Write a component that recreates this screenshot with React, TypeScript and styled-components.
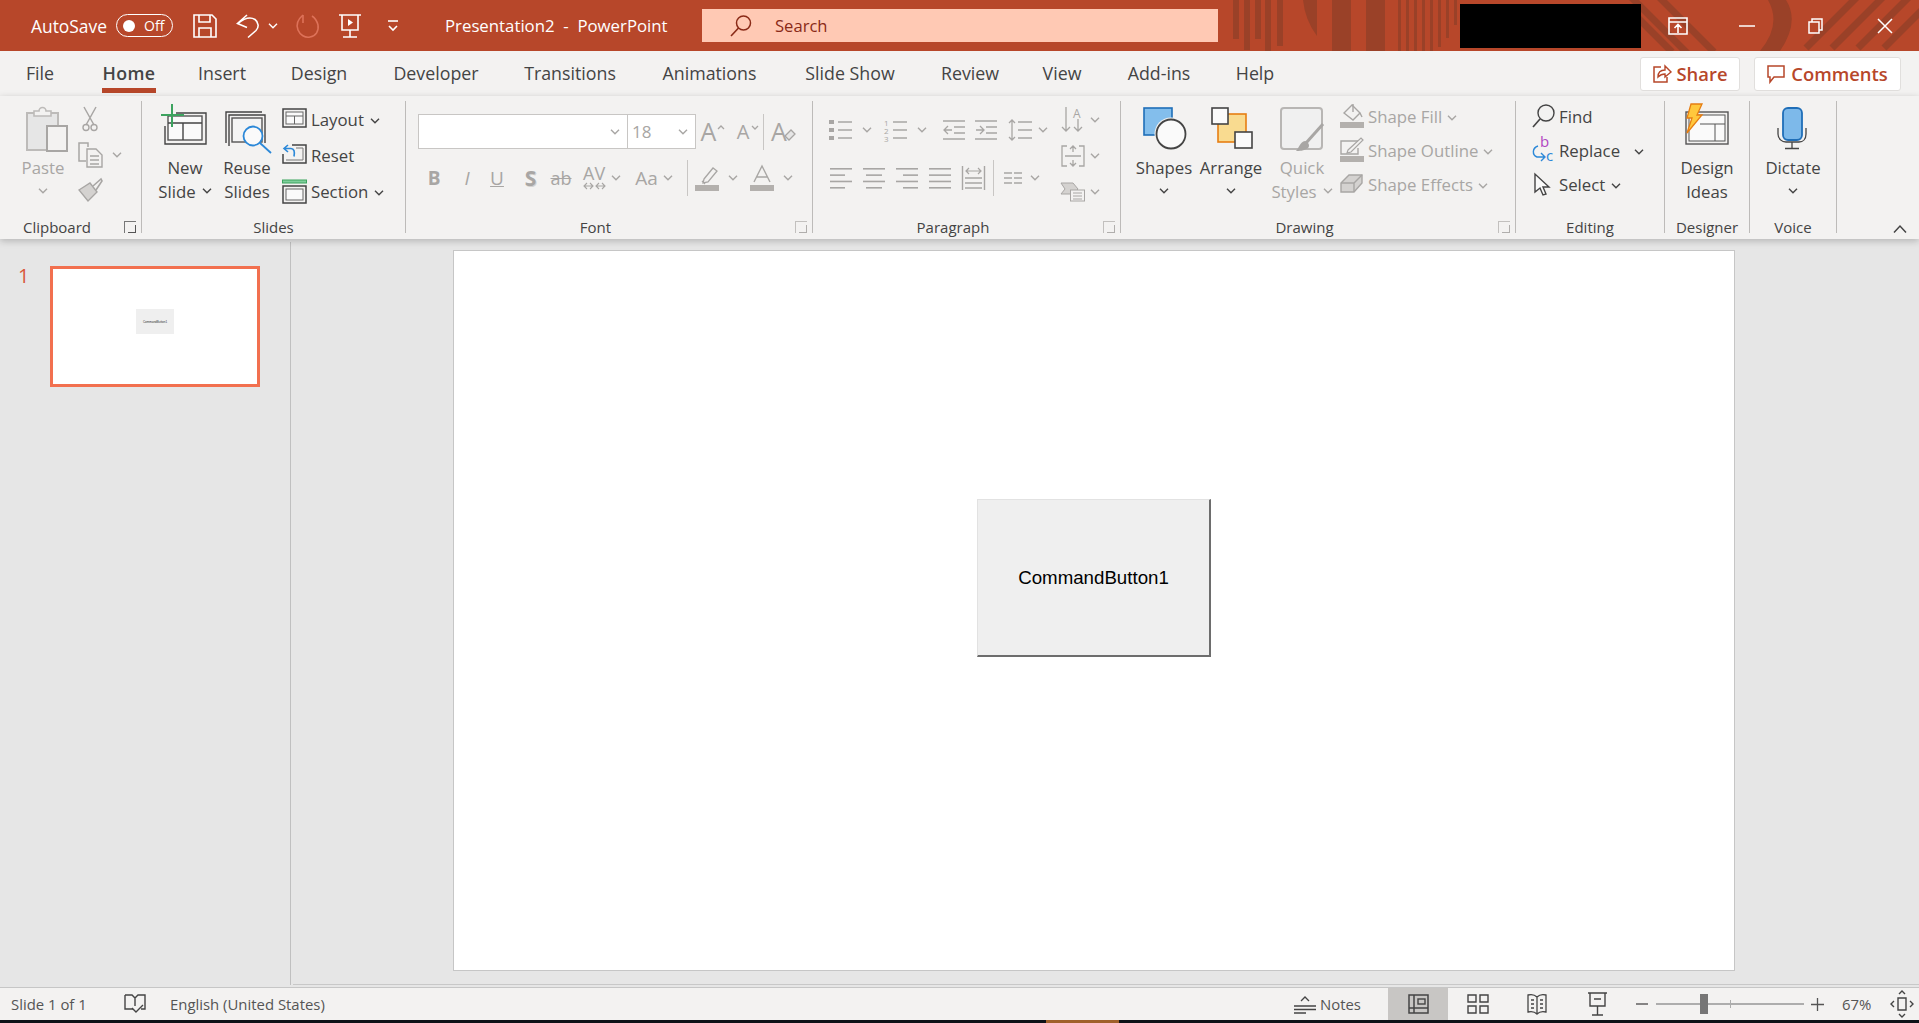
import React from 'react';
import styled, { createGlobalStyle } from 'styled-components';

const FONT = '"Open Sans", "Noto Sans", sans-serif';
const ACCENT = '#b7472a';
const INK = '#444444';
const MUTED = '#a8a6a4';
const BLUE = '#2b88d8';

const GlobalStyle = createGlobalStyle`
  html, body { margin: 0; padding: 0; background: #000; }
  body { font-family: ${FONT}; overflow: hidden; }
  * { box-sizing: border-box; }
`;

const Page = styled.div`
  width: 1919px;
  height: 1023px;
  display: flex;
  flex-direction: column;
  overflow: hidden;
`;

/* ---------- shared bits ---------- */

const IconSvg = styled.svg<{ $ml?: number }>`
  display: block;
  flex: none;
  overflow: visible;
  margin-left: ${(p) => p.$ml ?? 0}px;
`;

// box is "x y w h" in reference pixels, so shapes can be drawn with the coordinates read off the screenshot
const Ico = ({ box, ml, children }: { box: string; ml?: number; children: React.ReactNode }) => {
  const [, , w, h] = box.split(' ');
  return (
    <IconSvg $ml={ml} width={w} height={h} viewBox={box} fill="none">
      {children}
    </IconSvg>
  );
};

const Chevron = ({ ml, color = MUTED }: { ml?: number; color?: string }) => (
  <Ico box="0 0 10 6" ml={ml}>
    <path d="M1 .8 5 4.8 9 .8" stroke={color} strokeWidth="1.4" />
  </Ico>
);

const Launcher = styled.span<{ $dark?: boolean }>`
  position: absolute;
  right: 5px;
  bottom: 0;
  width: 12px;
  height: 12px;
  border-left: 1px solid ${(p) => (p.$dark ? '#777' : '#c2c0be')};
  border-top: 1px solid ${(p) => (p.$dark ? '#777' : '#c2c0be')};
  &::after {
    content: '';
    position: absolute;
    right: 0;
    bottom: 0;
    width: 7px;
    height: 7px;
    border-right: 1.5px solid ${(p) => (p.$dark ? '#555' : '#b0aeac')};
    border-bottom: 1.5px solid ${(p) => (p.$dark ? '#555' : '#b0aeac')};
  }
`;

/* ---------- title bar ---------- */

const TitleBar = styled.header`
  position: relative;
  height: 51px;
  flex: none;
  display: flex;
  align-items: center;
  padding-left: 31px;
  background: ${ACCENT};
  color: #fff;
`;

const TitlePattern = styled.svg`
  position: absolute;
  top: 0;
  left: 1230px;
`;

const AutoSaveLabel = styled.span`
  position: relative;
  width: 76px;
  font-size: 17.4px;
  white-space: nowrap;
`;

const Toggle = styled.span`
  position: relative;
  margin-left: 9px;
  width: 57px;
  height: 23px;
  flex: none;
  border: 1.5px solid #fff;
  border-radius: 12px;
  display: flex;
  align-items: center;
  padding-left: 6px;
  font-size: 14px;
  &::before {
    content: '';
    width: 12px;
    height: 12px;
    border-radius: 50%;
    background: #fff;
    margin-right: 9px;
  }
`;

const DocTitle = styled.span`
  position: relative;
  margin-left: 47px;
  width: 257px;
  font-size: 16.8px;
  white-space: pre;
`;

const SearchBox = styled.div`
  position: relative;
  width: 516px;
  height: 33px;
  display: flex;
  align-items: center;
  padding-left: 28px;
  background: #ffc9b4;
  color: #8a2a17;
  font-size: 16.6px;
`;

const SearchLabel = styled.span`
  margin-left: 23px;
`;

const AccountMask = styled.div`
  position: relative;
  margin-left: 242px;
  width: 181px;
  height: 44px;
  background: #000;
`;

const WindowButton = styled.span<{ $ml?: number }>`
  position: relative;
  width: 69px;
  margin-left: ${(p) => p.$ml ?? 0}px;
  display: flex;
  justify-content: center;
`;

const Pattern = () => (
  <TitlePattern width="689" height="51" viewBox="1230 0 689 51" fill="#9a4128">
    {[
      [1233, 39],
      [1244, 50],
      [1255, 39],
      [1265, 51],
      [1277, 46],
    ].map(([x, h]) => (
      <rect key={x} x={x} y="0" width="6" height={h} />
    ))}
    <path d="M1303 0Q1305 20 1317 36V0Z" />
    <rect x="1332" width="19" height="51" />
    <rect x="1366" width="19" height="51" />
    {[
      [1398, 51],
      [1406, 51],
      [1414, 51],
      [1422, 51],
      [1430, 51],
      [1438, 47],
      [1446, 38],
      [1454, 25],
    ].map(([x, h]) => (
      <rect key={x} x={x} y="0" width="3" height={h} />
    ))}
    <path d="M1768 0Q1782 25 1760 51H1780Q1800 22 1786 0Z" />
    <g stroke="#9a4128" strokeWidth="7">
      <path d="M1628 -6 1690 56M1650 -12 1714 52M1636 16 1672 52" />
      <path d="M1806 48 1858 -4M1832 48 1884 -4M1858 48 1910 -4M1884 48 1936 -4" />
    </g>
  </TitlePattern>
);

const TitleIcons = {
  save: (
    <Ico box="0 0 24 24" ml={20}>
      <path d="M1 1h18l4 4v18H1z" stroke="#fff" strokeWidth="1.6" />
      <path d="M6 1v7h11V1M6 23v-9h12v9" stroke="#fff" strokeWidth="1.6" />
    </Ico>
  ),
  undo: (
    <Ico box="0 0 24 24" ml={19}>
      <path d="M11 1 1.500 9.500 11 13.500M2 9.500c6-5 12-7 17-4 4 3 4 8 1 11l-8 7" stroke="#fff" strokeWidth="1.6" />
    </Ico>
  ),
  redo: (
    <Ico box="0 0 25 24" ml={17}>
      <path d="M8 1C2 6 1 11 3 16c2 5 7 8 12 7 6-1 9-6 8-12-1-4-3-7-6-9" stroke="#de7259" strokeWidth="1.6" />
      <path d="M8 1v8" stroke="#de7259" strokeWidth="1.6" />
    </Ico>
  ),
  present: (
    <Ico box="0 0 24 24" ml={18}>
      <path d="M1 1h22M4 1v15h16V1M12 16v7M5 23h14" stroke="#fff" strokeWidth="1.6" />
      <path d="M10 5l5 3.500L10 12z" fill="#fff" />
    </Ico>
  ),
  customize: (
    <Ico box="0 0 10 14" ml={26}>
      <path d="M0 2h10" stroke="#fff" strokeWidth="1.6" />
      <path d="M1 7l4 4 4-4" stroke="#fff" strokeWidth="1.6" />
    </Ico>
  ),
};

/* ---------- tabs ---------- */

const TabRow = styled.nav`
  height: 45px;
  flex: none;
  display: flex;
  padding-left: 2px;
  background: #f3f2f1;
  color: ${INK};
`;

const Tab = styled.div<{ $w: number }>`
  width: ${(p) => p.$w}px;
  display: flex;
  justify-content: center;
  font-size: 17.8px;
  white-space: nowrap;
`;

const TabLabel = styled.span<{ $active?: boolean }>`
  height: 42px;
  padding-top: 9px;
  line-height: 26px;
  font-weight: ${(p) => (p.$active ? 600 : 400)};
  letter-spacing: ${(p) => (p.$active ? '0.4px' : '0')};
  border-bottom: 5px solid ${(p) => (p.$active ? ACCENT : 'transparent')};
`;

const RibbonActions = styled.div`
  margin-left: auto;
  margin-right: 18px;
  display: flex;
  align-items: center;
  gap: 14px;
`;

const ActionButton = styled.button<{ $w: number }>`
  width: ${(p) => p.$w}px;
  height: 34px;
  padding: 0;
  display: flex;
  align-items: center;
  justify-content: center;
  gap: 6px;
  border: 1px solid #e1dfdd;
  border-radius: 3px;
  background: #fff;
  color: ${ACCENT};
  font: 600 18.4px ${FONT};
`;

/* ---------- ribbon ---------- */

const Ribbon = styled.section`
  position: relative;
  z-index: 2;
  height: 143px;
  flex: none;
  display: flex;
  padding-top: 5px;
  background: #f3f2f1;
  color: ${INK};
  box-shadow: 0 2px 7px rgba(0, 0, 0, 0.22);
`;

const Group = styled.div<{ $w: number }>`
  position: relative;
  width: ${(p) => p.$w}px;
  height: 132px;
  flex: none;
  border-right: 1px solid #bdbbb9;
`;

const GroupBody = styled.div<{ $pl?: number }>`
  height: 117px;
  display: flex;
  padding-left: ${(p) => p.$pl ?? 0}px;
`;

const GroupLabel = styled.div<{ $launcher?: boolean }>`
  height: 15px;
  line-height: 18px;
  padding-right: ${(p) => (p.$launcher ? 27 : 0)}px;
  text-align: center;
  font-size: 15px;
  white-space: nowrap;
`;

const BigButton = styled.div<{ $w: number; $ml?: number; $muted?: boolean }>`
  width: ${(p) => p.$w}px;
  margin-left: ${(p) => p.$ml ?? 0}px;
  flex: none;
  display: flex;
  flex-direction: column;
  align-items: center;
  padding-top: 3px;
  color: ${(p) => (p.$muted ? MUTED : INK)};
`;

const BigLine = styled.div`
  height: 24px;
  margin-top: -2px;
  margin-bottom: 2px;
  display: flex;
  align-items: center;
  gap: 6px;
  font-size: 16.8px;
  white-space: nowrap;
`;

const SmallStack = styled.div<{ $ml?: number; $pt?: number }>`
  margin-left: ${(p) => p.$ml ?? 0}px;
  padding-top: ${(p) => p.$pt ?? 0}px;
  display: flex;
  flex-direction: column;
`;

const SmallRow = styled.div<{ $h: number; $muted?: boolean }>`
  height: ${(p) => p.$h}px;
  display: flex;
  align-items: center;
  font-size: 16.8px;
  line-height: 20px;
  white-space: nowrap;
  color: ${(p) => (p.$muted ? MUTED : INK)};
`;

const RowText = styled.span`
  position: relative;
  top: -1px;
`;

const Stack = styled.div<{ $pt?: number; $pl?: number; $w?: number }>`
  display: flex;
  flex-direction: column;
  flex: none;
  padding-top: ${(p) => p.$pt ?? 0}px;
  padding-left: ${(p) => p.$pl ?? 0}px;
  width: ${(p) => (p.$w ? `${p.$w}px` : 'auto')};
`;

const ToolRow = styled.div<{ $h?: number; $mt?: number }>`
  height: ${(p) => p.$h ?? 36}px;
  margin-top: ${(p) => p.$mt ?? 0}px;
  display: flex;
  align-items: center;
`;

const Combo = styled.div<{ $w: number }>`
  width: ${(p) => p.$w}px;
  height: 35px;
  padding: 0 7px 0 4px;
  display: flex;
  align-items: center;
  justify-content: space-between;
  background: #fff;
  border: 1px solid #c8c6c4;
  margin-right: -1px;
  color: ${MUTED};
  font-size: 17px;
`;

const Glyph = styled.span<{
  $ml?: number;
  $w: number;
  $size: number;
  $bold?: boolean;
  $italic?: boolean;
  $line?: string;
  $shadow?: boolean;
}>`
  position: relative;
  flex: none;
  margin-left: ${(p) => p.$ml ?? 0}px;
  width: ${(p) => p.$w}px;
  display: flex;
  justify-content: center;
  color: ${MUTED};
  font-size: ${(p) => p.$size}px;
  line-height: 1;
  font-weight: ${(p) => (p.$bold ? 700 : 400)};
  font-style: ${(p) => (p.$italic ? 'italic' : 'normal')};
  text-decoration: ${(p) => p.$line ?? 'none'};
  text-shadow: ${(p) => (p.$shadow ? '1px 1px 0 #d4d2d0' : 'none')};
  white-space: nowrap;
`;

const Divider = styled.span<{ $ml: number; $h?: number }>`
  flex: none;
  width: 1px;
  height: ${(p) => p.$h ?? 36}px;
  margin-left: ${(p) => p.$ml}px;
  background: #c8c6c4;
`;

const Collapse = styled.span`
  position: absolute;
  right: 12px;
  bottom: 6px;
`;

/* lists of rule lines, used for the paragraph tools */
const Rules = ({ rows, ml }: { rows: [number, number][]; ml?: number }) => (
  <Ico box="0 0 23 22" ml={ml}>
    {rows.map(([x, w], i) => (
      <rect key={i} x={x} y={1 + (i * 19) / (rows.length - 1)} width={w} height="1.6" fill={MUTED} />
    ))}
  </Ico>
);

/* ---------- workspace ---------- */

const Workspace = styled.main`
  height: 748px;
  flex: none;
  display: flex;
  padding: 3px 0 2px;
  background: #e6e6e6;
`;

const ThumbPane = styled.aside`
  width: 291px;
  flex: none;
  display: flex;
  padding-top: 24px;
  border-right: 1px solid #c0c0c0;
`;

const ThumbNumber = styled.span`
  width: 50px;
  padding-left: 18px;
  margin-top: -1px;
  color: #d9583a;
  font-size: 20px;
  line-height: 22px;
`;

const Thumb = styled.div`
  width: 210px;
  height: 121px;
  padding-top: 40px;
  display: flex;
  justify-content: center;
  background: #fff;
  border: 3px solid #f2704f;
`;

const ThumbButton = styled.div`
  width: 38px;
  height: 25px;
  display: flex;
  align-items: center;
  justify-content: center;
  background: #efefef;
  color: #333;
  font: 3px 'Liberation Sans', Arial, sans-serif;
  white-space: nowrap;
`;

const MainArea = styled.div`
  flex: 1;
  margin-left: 2px;
  padding: 8px 0 0 160px;
  border-bottom: 1px solid #c8c8c8;
`;

const Slide = styled.div`
  width: 1282px;
  height: 721px;
  display: flex;
  flex-direction: column;
  align-items: center;
  padding-top: 248px;
  background: #fff;
  border: 1px solid #c6c6c6;
`;

const CommandButton = styled.div`
  width: 234px;
  height: 158px;
  padding-top: 1px;
  display: flex;
  align-items: center;
  justify-content: center;
  background: #efefef;
  border-style: solid;
  border-width: 1px 2px 2px 1px;
  border-color: #e2e2e2 #6d6d6d #6d6d6d #e2e2e2;
  color: #000;
  font: 18.7px 'Liberation Sans', Arial, sans-serif;
`;

/* ---------- status bar ---------- */

const StatusBar = styled.footer`
  height: 33px;
  flex: none;
  display: flex;
  align-items: center;
  padding-left: 11px;
  background: #f3f2f1;
  border-top: 1px solid #c6c6c6;
  color: #555;
  font-size: 14.9px;
  line-height: 18px;
`;

const StatusText = styled.span<{ $ml?: number; $w?: number }>`
  flex: none;
  margin-left: ${(p) => p.$ml ?? 0}px;
  margin-top: -1px;
  width: ${(p) => (p.$w ? `${p.$w}px` : 'auto')};
  white-space: nowrap;
`;

const StatusRight = styled.div`
  margin-left: auto;
  width: 625px;
  height: 100%;
  display: flex;
  align-items: center;
`;

const ActiveView = styled.span`
  margin-left: 28px;
  width: 60px;
  height: 100%;
  flex: none;
  display: flex;
  align-items: center;
  justify-content: center;
  background: #c8c6c4;
`;

const ZoomTrack = styled.div`
  position: relative;
  margin-left: 8px;
  width: 148px;
  height: 2px;
  flex: none;
  background: #adadad;
`;

const ZoomTick = styled.span`
  position: absolute;
  left: 74px;
  top: -3px;
  width: 1px;
  height: 8px;
  background: #adadad;
`;

const ZoomThumb = styled.span`
  position: absolute;
  left: 44px;
  top: -9px;
  width: 8px;
  height: 20px;
  background: #767676;
`;

const Taskbar = styled.div`
  height: 3px;
  flex: none;
  padding-left: 1046px;
  background: #0d1117;
`;

const TaskbarActive = styled.span`
  display: block;
  width: 73px;
  height: 3px;
  background: #a0602a;
`;

/* ---------- data ---------- */

const TABS: [string, number][] = [
  ['File', 76],
  ['Home', 102],
  ['Insert', 84],
  ['Design', 110],
  ['Developer', 124],
  ['Transitions', 144],
  ['Animations', 135],
  ['Slide Show', 146],
  ['Review', 94],
  ['View', 90],
  ['Add-ins', 104],
  ['Help', 88],
];

const App = () => (
  <Page>
    <GlobalStyle />

    <TitleBar>
      <Pattern />
      <AutoSaveLabel>AutoSave</AutoSaveLabel>
      <Toggle>Off</Toggle>
      {TitleIcons.save}
      {TitleIcons.undo}
      <Chevron ml={8} color="#fff" />
      {TitleIcons.redo}
      {TitleIcons.present}
      {TitleIcons.customize}
      <DocTitle>Presentation2  -  PowerPoint</DocTitle>
      <SearchBox>
        <Ico box="0 0 22 22">
          <circle cx="13.500" cy="8" r="7" stroke="#8a2a17" strokeWidth="1.5" />
          <path d="M8.500 13 1 21" stroke="#8a2a17" strokeWidth="1.6" />
        </Ico>
        <SearchLabel>Search</SearchLabel>
      </SearchBox>
      <AccountMask />
      <WindowButton $ml={2}>
        <Ico box="0 0 20 18">
          <path d="M1 1h18v16H1zM1 5h18M10 16V8M6.500 11 10 7.500l3.500 3.500" stroke="#fff" strokeWidth="1.6" />
        </Ico>
      </WindowButton>
      <WindowButton>
        <Ico box="0 0 16 2">
          <path d="M0 1h16" stroke="#fff" strokeWidth="1.5" />
        </Ico>
      </WindowButton>
      <WindowButton>
        <Ico box="0 0 15 16">
          <path d="M1 4h10v11H1zM4 4V1h10v11h-3" stroke="#fff" strokeWidth="1.5" />
        </Ico>
      </WindowButton>
      <WindowButton>
        <Ico box="0 0 16 16">
          <path d="M1 1l14 14M15 1 1 15" stroke="#fff" strokeWidth="1.5" />
        </Ico>
      </WindowButton>
    </TitleBar>

    <TabRow>
      {TABS.map(([name, w]) => (
        <Tab key={name} $w={w}>
          <TabLabel $active={name === 'Home'}>{name}</TabLabel>
        </Tab>
      ))}
      <RibbonActions>
        <ActionButton $w={100}>
          <Ico box="0 0 18 18">
            <path d="M8 2H1v15h13v-5" stroke={ACCENT} strokeWidth="1.5" />
            <path d="M5 12c0-5 3-7 7-7V1l6 6-6 5V9c-3 0-5 1-7 3z" stroke={ACCENT} strokeWidth="1.4" />
          </Ico>
          Share
        </ActionButton>
        <ActionButton $w={147}>
          <Ico box="0 0 18 18">
            <path d="M1 1h16v11H7l-4 5v-5H1z" stroke={ACCENT} strokeWidth="1.5" />
          </Ico>
          Comments
        </ActionButton>
      </RibbonActions>
    </TabRow>

    <Ribbon>
      <Group $w={142}>
        <GroupBody $pl={20}>
          <BigButton $w={46} $muted>
            <Ico box="20 104 46 53">
              <rect x="27" y="113" width="31" height="37" fill="#e6e6e6" stroke="#bdbbb9" strokeWidth="2" />
              <path d="M34 116v-5h5a3.500 3.500 0 0 1 7 0h5v5z" fill="#f3f2f1" stroke="#bdbbb9" strokeWidth="1.6" />
              <rect x="47" y="126" width="20" height="25" fill="#f3f2f1" stroke={MUTED} strokeWidth="2" />
            </Ico>
            <BigLine>Paste</BigLine>
            <BigLine>
              <Chevron />
            </BigLine>
          </BigButton>
          <SmallStack $ml={12}>
            <SmallRow $h={36}>
              <Ico box="78 101 28 36">
                <path d="M84 107l10 18M96 107l-10 18" stroke={MUTED} strokeWidth="1.5" />
                <circle cx="86" cy="127.500" r="3" stroke={MUTED} strokeWidth="1.4" />
                <circle cx="94" cy="127.500" r="3" stroke={MUTED} strokeWidth="1.4" />
              </Ico>
            </SmallRow>
            <SmallRow $h={36}>
              <Ico box="78 137 28 36">
                <path d="M88 147v-4h-9v18h7" stroke={MUTED} strokeWidth="1.5" />
                <path d="M87 149h9l6 6v12H87zM90 156h9M90 160h9M90 164h9" stroke={MUTED} strokeWidth="1.4" />
              </Ico>
              <Chevron ml={6} />
            </SmallRow>
            <SmallRow $h={36}>
              <Ico box="78 173 28 36">
                <path d="M79 190l11-7 7 9-9 9z" fill="#d4d2d0" stroke={MUTED} strokeWidth="1.4" />
                <path d="M93 186l8-7 1 2-6 9" stroke={MUTED} strokeWidth="1.6" />
              </Ico>
            </SmallRow>
          </SmallStack>
        </GroupBody>
        <GroupLabel $launcher>Clipboard</GroupLabel>
        <Launcher $dark />
      </Group>

      <Group $w={264}>
        <GroupBody $pl={13}>
          <BigButton $w={60}>
            <Ico box="155 104 60 53">
              <rect x="168" y="116" width="34" height="24" fill="#fafafa" stroke="#555" strokeWidth="1.4" />
              <path d="M176 113h30v31h-41v-18M168 123h34M183 123v17" stroke="#444" strokeWidth="1.4" />
              <path d="M161 115h23M172 104v23" stroke="#3ca35f" strokeWidth="2" />
            </Ico>
            <BigLine>New</BigLine>
            <BigLine>
              Slide
              <Chevron color={INK} />
            </BigLine>
          </BigButton>
          <BigButton $w={56} $ml={4}>
            <Ico box="219 104 56 53">
              <path d="M226 143v-31h36M229 146v-31h36v28" stroke="#444" strokeWidth="1.4" />
              <rect x="232" y="118" width="30" height="24" fill="#f4f4f4" stroke="#555" strokeWidth="1.4" />
              <circle cx="253" cy="136" r="9.500" fill="#fafafa" stroke={BLUE} strokeWidth="1.8" />
              <path d="M260 143l11 10" stroke={BLUE} strokeWidth="1.8" />
            </Ico>
            <BigLine>Reuse</BigLine>
            <BigLine>Slides</BigLine>
          </BigButton>
          <SmallStack $ml={7} $pt={2}>
            <SmallRow $h={36}>
              <Ico box="282 103 29 36">
                <rect x="283" y="109" width="23" height="18" stroke="#444" strokeWidth="1.5" />
                <rect x="286" y="112" width="17" height="12" fill="#fafafa" stroke="#666" />
                <path d="M286 116h17M294.500 116v8" stroke="#666" />
              </Ico>
              <RowText>Layout</RowText>
              <Chevron ml={6} color={INK} />
            </SmallRow>
            <SmallRow $h={36}>
              <Ico box="282 139 29 36">
                <path d="M292 145h14v18h-23v-9" stroke="#444" strokeWidth="1.5" />
                <path d="M296 148h7v12h-17" stroke="#777" />
                <path d="M288 145l-4 3.500 4 3.500M284 148.500h7c3 0 4 3 3 8" stroke={BLUE} strokeWidth="1.6" />
              </Ico>
              <RowText>Reset</RowText>
            </SmallRow>
            <SmallRow $h={36}>
              <Ico box="282 175 29 36">
                <rect x="282.500" y="180" width="24" height="3" fill="#7fce9b" stroke="#3ca35f" />
                <rect x="283" y="186" width="23" height="17" stroke="#444" strokeWidth="1.5" />
                <rect x="286" y="189" width="17" height="11" fill="#fafafa" stroke="#666" />
              </Ico>
              <RowText>Section</RowText>
              <Chevron ml={6} color={INK} />
            </SmallRow>
          </SmallStack>
        </GroupBody>
        <GroupLabel>Slides</GroupLabel>
      </Group>

      <Group $w={407}>
        <GroupBody>
          <Stack $pt={13} $pl={12}>
            <ToolRow $h={35}>
              <Combo $w={210}>
                <span />
                <Chevron />
              </Combo>
              <Combo $w={69}>
                18
                <Chevron />
              </Combo>
              <Glyph $ml={6} $w={15} $size={25}>A</Glyph>
              <Ico box="0 0 8 16" ml={1}>
                <path d="M1 5l3-3 3 3" stroke={MUTED} strokeWidth="1.3" />
              </Ico>
              <Glyph $ml={11} $w={14} $size={20}>A</Glyph>
              <Ico box="0 0 8 16" ml={1}>
                <path d="M1 2l3 3 3-3" stroke={MUTED} strokeWidth="1.3" />
              </Ico>
              <Divider $ml={4} />
              <Glyph $ml={8} $w={14} $size={25}>A</Glyph>
              <Ico box="0 0 12 24" ml={-2}>
                <path d="M1 16l6-6 4 4-6 6z" fill="#e6e6e6" stroke={MUTED} strokeWidth="1.3" />
              </Ico>
            </ToolRow>
            <ToolRow $mt={11}>
              <Glyph $ml={10} $w={12} $size={19} $bold>B</Glyph>
              <Glyph $ml={22} $w={10} $size={19} $italic>I</Glyph>
              <Glyph $ml={18} $w={14} $size={19} $line="underline">U</Glyph>
              <Glyph $ml={20} $w={13} $size={21} $bold $shadow>S</Glyph>
              <Glyph $ml={14} $w={20} $size={18} $line="line-through">ab</Glyph>
              <Ico box="0 0 23 26" ml={12}>
                <text x="0" y="15" fontSize="18" fontFamily="Open Sans" fill={MUTED}>AV</text>
                <path d="M1 21h9M4 18l-3 3 3 3M7 18l3 3-3 3M13 21h9M16 18l-3 3 3 3M19 18l3 3-3 3" stroke={MUTED} strokeWidth="1.1" />
              </Ico>
              <Chevron ml={5} />
              <Glyph $ml={14} $w={23} $size={19}>Aa</Glyph>
              <Chevron ml={5} />
              <Divider $ml={14} />
              <Ico box="0 0 24 24" ml={7}>
                <path d="M9 13 18 2l4 3-9 11-5 1zM7 15l3 3" stroke={MUTED} strokeWidth="1.3" />
                <rect y="19" width="24" height="6" fill="#b3b0ad" />
              </Ico>
              <Chevron ml={9} />
              <Ico box="0 0 24 24" ml={12}>
                <path d="M4 16 12 0l8 16M7 11h10" stroke={MUTED} strokeWidth="1.4" />
                <rect y="19" width="24" height="6" fill="#b3b0ad" />
              </Ico>
              <Chevron ml={9} />
            </ToolRow>
          </Stack>
        </GroupBody>
        <GroupLabel $launcher>Font</GroupLabel>
        <Launcher />
      </Group>

      <Group $w={308}>
        <GroupBody>
          <Stack $pt={11} $w={248}>
            <ToolRow>
              <Ico box="0 0 23 24" ml={16}>
                <path d="M0 2h5v4H0zM0 10h5v4H0zM0 18h5v4H0z" fill={MUTED} />
                <path d="M9 4h14M9 12h14M9 20h14" stroke={MUTED} strokeWidth="1.6" />
              </Ico>
              <Chevron ml={10} />
              <Ico box="0 0 23 24" ml={12}>
                <text x="0" y="8" fontSize="8" fontFamily="Open Sans" fill={MUTED}>1</text>
                <text x="0" y="16" fontSize="8" fontFamily="Open Sans" fill={MUTED}>2</text>
                <text x="0" y="24" fontSize="8" fontFamily="Open Sans" fill={MUTED}>3</text>
                <path d="M9 4h14M9 12h14M9 20h14" stroke={MUTED} strokeWidth="1.6" />
              </Ico>
              <Chevron ml={10} />
              <Ico box="0 0 22 24" ml={16}>
                <path d="M0 3h22M11 9h11M11 15h11M0 21h22" stroke={MUTED} strokeWidth="1.6" />
                <path d="M9 12H1M5 8l-4 4 4 4" stroke={MUTED} strokeWidth="1.3" />
              </Ico>
              <Ico box="0 0 22 24" ml={10}>
                <path d="M0 3h22M11 9h11M11 15h11M0 21h22" stroke={MUTED} strokeWidth="1.6" />
                <path d="M1 12h8M5 8l4 4-4 4" stroke={MUTED} strokeWidth="1.3" />
              </Ico>
              <Ico box="0 0 24 24" ml={11}>
                <path d="M10 4h14M10 12h14M10 20h14" stroke={MUTED} strokeWidth="1.6" />
                <path d="M4 2v20M1 5l3-3 3 3M1 19l3 3 3-3" stroke={MUTED} strokeWidth="1.3" />
              </Ico>
              <Chevron ml={6} />
            </ToolRow>
            <ToolRow $mt={12}>
              <Rules ml={17} rows={[[0, 22], [0, 15], [0, 22], [0, 15]]} />
              <Rules ml={10} rows={[[0, 22], [3, 16], [0, 22], [3, 16]]} />
              <Rules ml={10} rows={[[0, 22], [7, 15], [0, 22], [7, 15]]} />
              <Rules ml={10} rows={[[0, 22], [0, 22], [0, 22], [0, 22]]} />
              <Ico box="0 0 23 24" ml={10}>
                <path d="M.5 0v24M22.500 0v24M3 12h17M3 17h17M3 22h17" stroke={MUTED} strokeWidth="1.4" />
                <path d="M4 5h15M7 2 4 5l3 3M16 2l3 3-3 3" stroke={MUTED} strokeWidth="1.2" />
              </Ico>
              <Divider $ml={8} />
              <Ico box="0 0 18 14" ml={10}>
                <path d="M0 2h8M0 7h8M0 12h8M10 2h8M10 7h8M10 12h8" stroke={MUTED} strokeWidth="1.6" />
              </Ico>
              <Chevron ml={8} />
            </ToolRow>
          </Stack>
          <SmallStack $pt={1}>
            <SmallRow $h={36} $muted>
              <Ico box="0 0 24 26">
                <path d="M5 0v24M1 20l4 4 4-4M17 12v12M13 20l4 4 4-4" stroke={MUTED} strokeWidth="1.3" />
                <text x="12" y="11" fontSize="12" fontFamily="Open Sans" fill={MUTED}>A</text>
              </Ico>
              <Chevron ml={5} />
            </SmallRow>
            <SmallRow $h={36} $muted>
              <Ico box="0 0 24 22">
                <path d="M6 1H1v20h5M18 1h5v20h-5M4 11h16M12 1v6M9 4l3-3 3 3M12 15v6M9 18l3 3 3-3" stroke={MUTED} strokeWidth="1.3" />
              </Ico>
              <Chevron ml={5} />
            </SmallRow>
            <SmallRow $h={36} $muted>
              <Ico box="0 0 24 20">
                <path d="M0 1h12l5 6-5 5H0l4-5z" fill="#d4d2d0" stroke={MUTED} />
                <rect x="9.500" y="8" width="14" height="11" fill="#f3f2f1" stroke={MUTED} />
                <path d="M12 11h9M12 14h9M12 17h9" stroke={MUTED} />
              </Ico>
              <Chevron ml={5} />
            </SmallRow>
          </SmallStack>
        </GroupBody>
        <GroupLabel $launcher>Paragraph</GroupLabel>
        <Launcher />
      </Group>

      <Group $w={395}>
        <GroupBody $pl={11}>
          <BigButton $w={64}>
            <Ico box="1132 104 64 53">
              <rect x="1144" y="108" width="28" height="27" fill="#83beec" stroke="#1f6eb8" strokeWidth="1.6" />
              <circle cx="1171" cy="134" r="16.500" fill="#f3f2f1" />
              <circle cx="1171" cy="134" r="14.500" fill="#fafafa" stroke="#444" strokeWidth="1.8" />
            </Ico>
            <BigLine>Shapes</BigLine>
            <BigLine>
              <Chevron color={INK} />
            </BigLine>
          </BigButton>
          <BigButton $w={70}>
            <Ico box="1196 104 70 53">
              <rect x="1218" y="114" width="28" height="28" fill="#f9db90" stroke="#e67e12" strokeWidth="1.6" />
              <rect x="1212" y="108" width="16" height="16" fill="#fafafa" stroke="#444" strokeWidth="1.6" />
              <rect x="1235" y="132" width="17" height="16" fill="#fafafa" stroke="#444" strokeWidth="1.6" />
            </Ico>
            <BigLine>Arrange</BigLine>
            <BigLine>
              <Chevron color={INK} />
            </BigLine>
          </BigButton>
          <BigButton $w={72} $muted>
            <Ico box="1266 104 72 53">
              <rect x="1281" y="108" width="41" height="41" rx="3" fill="#f0f0f0" stroke="#b8b6b4" strokeWidth="2" />
              <path d="M1323 124l-17 19" stroke={MUTED} strokeWidth="3" />
              <path d="M1305 141c4 1 5 5 3 7-4 3-9 3-12 3 3-3 4-9 9-10z" fill={MUTED} />
            </Ico>
            <BigLine>Quick</BigLine>
            <BigLine>
              Styles
              <Chevron />
            </BigLine>
          </BigButton>
          <SmallStack $ml={2}>
            <SmallRow $h={34} $muted>
              <Ico box="1340 101 28 34">
                <path d="M1344 113l8-8 8 8-7 7z" stroke={MUTED} strokeWidth="1.4" />
                <path d="M1353 104v8M1360 113l2 4" stroke={MUTED} strokeWidth="1.4" />
                <rect x="1340" y="122" width="24" height="6" fill="#b3b0ad" />
              </Ico>
              <RowText>Shape Fill</RowText>
              <Chevron ml={5} />
            </SmallRow>
            <SmallRow $h={34} $muted>
              <Ico box="1340 135 28 34">
                <path d="M1358 141h-17v13h17v-6" stroke={MUTED} strokeWidth="1.4" />
                <path d="M1348 150l13-12 2 2-12 12-4 1z" stroke={MUTED} strokeWidth="1.2" />
                <rect x="1340" y="156" width="24" height="6" fill="#b3b0ad" />
              </Ico>
              <RowText>Shape Outline</RowText>
              <Chevron ml={5} />
            </SmallRow>
            <SmallRow $h={34} $muted>
              <Ico box="1340 169 28 34">
                <path d="M1341 183l8-8h13v8l-8 9h-13z" fill="#d4d2d0" stroke={MUTED} strokeWidth="1.4" />
                <path d="M1341 183h13l8-8M1354 183v9" stroke={MUTED} strokeWidth="1.4" />
              </Ico>
              <RowText>Shape Effects</RowText>
              <Chevron ml={5} />
            </SmallRow>
          </SmallStack>
        </GroupBody>
        <GroupLabel $launcher>Drawing</GroupLabel>
        <Launcher />
      </Group>

      <Group $w={149}>
        <GroupBody $pl={15}>
          <SmallStack>
            <SmallRow $h={34}>
              <Ico box="1531 101 28 34">
                <circle cx="1546" cy="113" r="8" stroke="#444" strokeWidth="1.4" />
                <path d="M1540 119l-7 8" stroke="#444" strokeWidth="1.6" />
              </Ico>
              <RowText>Find</RowText>
            </SmallRow>
            <SmallRow $h={34}>
              <Ico box="1531 135 28 34">
                <text x="1540" y="147" fontSize="15" fontFamily="Open Sans" fill="#b146c2">b</text>
                <text x="1546" y="161" fontSize="15" fontFamily="Open Sans" fill={BLUE}>c</text>
                <path d="M1538 146c-6 2-6 9-1 11h7M1541 153l4 4-4 4" stroke={BLUE} strokeWidth="1.4" />
              </Ico>
              <RowText>Replace</RowText>
              <Chevron ml={14} color={INK} />
            </SmallRow>
            <SmallRow $h={34}>
              <Ico box="1531 169 28 34">
                <path d="M1535 174v18l5-4 3 7 3-1-3-7h6z" fill="#fafafa" stroke="#444" strokeWidth="1.4" />
              </Ico>
              <RowText>Select</RowText>
              <Chevron ml={6} color={INK} />
            </SmallRow>
          </SmallStack>
        </GroupBody>
        <GroupLabel>Editing</GroupLabel>
      </Group>

      <Group $w={85}>
        <GroupBody>
          <BigButton $w={84}>
            <Ico box="1665 104 84 53">
              <rect x="1686" y="112" width="42" height="32" stroke="#555" strokeWidth="1.4" />
              <rect x="1689" y="115" width="36" height="26" fill="#fafafa" stroke="#555" />
              <path d="M1700 124h25M1715 124v17" stroke="#555" />
              <path d="M1691 104h11l-5 11h5l-15 18 5-15h-5z" fill="#ffc83d" stroke="#e67e12" strokeWidth="1.3" />
            </Ico>
            <BigLine>Design</BigLine>
            <BigLine>Ideas</BigLine>
          </BigButton>
        </GroupBody>
        <GroupLabel>Designer</GroupLabel>
      </Group>

      <Group $w={87}>
        <GroupBody>
          <BigButton $w={86}>
            <Ico box="1750 104 86 53">
              <rect x="1783" y="108" width="19" height="32" rx="5" fill="#7db9ea" stroke="#1f6eb8" strokeWidth="1.8" />
              <path d="M1778 128v6c0 5 4 8 8 8h13c4 0 7-3 7-8v-6M1792 142v6M1785 148.500h14" stroke="#444" strokeWidth="1.3" />
            </Ico>
            <BigLine>Dictate</BigLine>
            <BigLine>
              <Chevron color={INK} />
            </BigLine>
          </BigButton>
        </GroupBody>
        <GroupLabel>Voice</GroupLabel>
      </Group>

      <Collapse>
        <Ico box="0 0 14 8">
          <path d="M1 7.500 7 1l6 6.500" stroke={INK} strokeWidth="1.5" />
        </Ico>
      </Collapse>
    </Ribbon>

    <Workspace>
      <ThumbPane>
        <ThumbNumber>1</ThumbNumber>
        <Thumb>
          <ThumbButton>CommandButton1</ThumbButton>
        </Thumb>
      </ThumbPane>
      <MainArea>
        <Slide>
          <CommandButton>CommandButton1</CommandButton>
        </Slide>
      </MainArea>
    </Workspace>

    <StatusBar>
      <StatusText $w={77}>Slide 1 of 1</StatusText>
      <Ico box="0 0 22 20" ml={36}>
        <path d="M1 1h7l3 3 3-3h7v14h-4M1 1v14h8M11 4v8" stroke="#444" strokeWidth="1.4" />
        <path d="M8 14l4 4 7-7" stroke="#444" strokeWidth="1.4" />
      </Ico>
      <StatusText $ml={24}>English (United States)</StatusText>
      <StatusRight>
        <Ico box="0 0 22 18">
          <path d="M0 11h22M0 14.500h22M0 18h12M7 6l4-4 4 4" stroke="#444" strokeWidth="1.3" />
        </Ico>
        <StatusText $ml={4} $w={40}>Notes</StatusText>
        <ActiveView>
          <Ico box="0 0 21 20">
            <path d="M1 1h19v18H1zM6 1v18M1 14h19" stroke="#444" strokeWidth="1.5" />
            <rect x="10" y="5" width="7" height="5" stroke="#444" strokeWidth="1.4" />
          </Ico>
        </ActiveView>
        <Ico box="0 0 22 20" ml={19}>
          <path d="M1 1h8v7H1zM13 1h8v7h-8zM1 12h8v7H1zM13 12h8v7h-8z" stroke="#444" strokeWidth="1.4" />
        </Ico>
        <Ico box="0 0 20 22" ml={38}>
          <path d="M1 2c4-1 7 0 9 2 2-2 5-3 9-2v17c-4-1-7 0-9 2-2-2-5-3-9-2zM10 4v17M4 7h3M4 11h3M4 15h3M13 7h3M13 11h3M13 15h3" stroke="#444" strokeWidth="1.3" />
        </Ico>
        <Ico box="0 0 19 24" ml={41}>
          <path d="M0 1h19M2 1v13h15V1M9.500 14v9M4 23h11M6 7h7" stroke="#444" strokeWidth="1.4" />
        </Ico>
        <Ico box="0 0 12 2" ml={29}>
          <path d="M0 1h12" stroke="#555" strokeWidth="1.4" />
        </Ico>
        <ZoomTrack>
          <ZoomTick />
          <ZoomThumb />
        </ZoomTrack>
        <Ico box="0 0 13 13" ml={7}>
          <path d="M0 6.500h13M6.500 0v13" stroke="#555" strokeWidth="1.3" />
        </Ico>
        <StatusText $ml={18} $w={31}>67%</StatusText>
        <Ico box="0 0 22 26" ml={18}>
          <path d="M7 7h8v12H7z" stroke="#444" strokeWidth="1.4" />
          <path d="M8 3l3-3 3 3M8 23l3 3 3-3M3 10l-3 3 3 3M19 10l3 3-3 3" stroke="#444" strokeWidth="1.4" />
        </Ico>
      </StatusRight>
    </StatusBar>
    <Taskbar>
      <TaskbarActive />
    </Taskbar>
  </Page>
);

export default App;
